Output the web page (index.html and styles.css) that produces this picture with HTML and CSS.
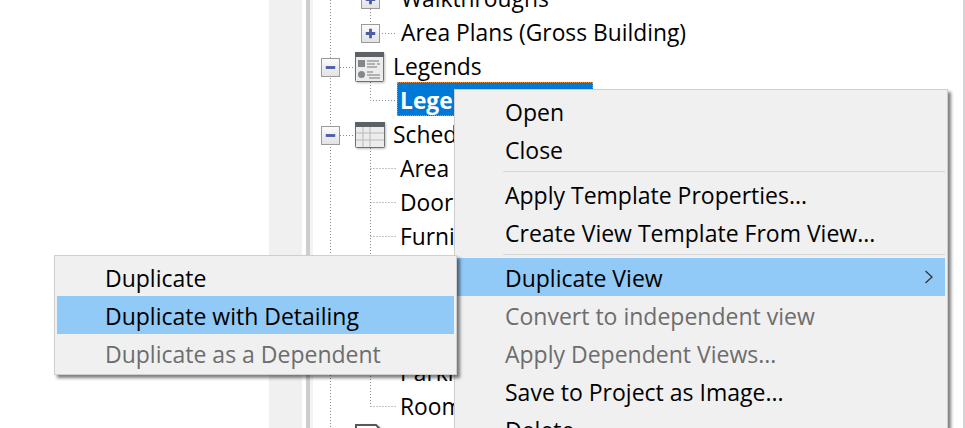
FILE: index.html
```html
<!DOCTYPE html>
<html lang="en">
<head>
<meta charset="utf-8">
<title>Duplicate View menu</title>
<link rel="stylesheet" href="styles.css">
</head>
<body>
<div class="app">
  <div class="pane-left"></div>
  <div class="band"></div>
  <div class="gap"></div>
  <div class="splitter"></div>
  <div class="edge"></div>
  <div class="tree">
    <svg class="lines" width="650" height="428" viewBox="0 0 650 428">
      <path d="M17.5 0V428M57.5 0V24M27 67.5H42M27 135.5H42M66 33.5H84M57.5 79V100.5H84M57.5 148V406.5M57.5 168.5H84M57.5 202.5H84M57.5 236.5H84M57.5 270.5H84M57.5 304.5H84M57.5 338.5H84M57.5 372.5H84M57.5 406.5H84"/>
    </svg>
    <div class="rows">
      <div class="row leaf-box"><span class="box"><svg class="sign" viewBox="0 0 18 18"><path d="M4 9H14M9 4V14"/></svg></span><span class="label">Walkthroughs</span></div>
      <div class="row leaf-box"><span class="box"><svg class="sign" viewBox="0 0 18 18"><path d="M4 9H14M9 4V14"/></svg></span><span class="label">Area Plans (Gross Building)</span></div>
      <div class="row branch">
        <span class="box"><svg class="sign" viewBox="0 0 18 18"><path d="M4 9H14"/></svg></span>
        <svg class="node-icon" viewBox="0 0 30 30">
          <rect class="ic-body" x="0.5" y="0.5" width="28" height="29" rx="1"/>
          <rect class="ic-head" x="0" y="0" width="29" height="5"/>
          <rect class="ic-fill" x="3" y="8" width="7" height="7"/>
          <circle class="ic-fill" cx="6.5" cy="22.5" r="3.5"/>
          <path class="ic-text" d="M12 9H24M12 12H20M22 12H25M12 15H22M12 20H18M12 23H25M14 26H25"/>
        </svg>
        <span class="label">Legends</span>
      </div>
      <div class="row leaf"><span class="label selected">Lege</span></div>
      <div class="row branch">
        <span class="box"><svg class="sign" viewBox="0 0 18 18"><path d="M4 9H14"/></svg></span>
        <svg class="node-icon" viewBox="0 0 30 30">
          <rect class="ic-body" x="0.5" y="2.5" width="29" height="25" rx="1"/>
          <rect class="ic-head" x="0" y="2" width="30" height="5"/>
          <path class="ic-grid" d="M8 7V27M15 7V27M1 13H29M1 20H29"/>
        </svg>
        <span class="label">Sched</span>
      </div>
      <div class="row leaf"><span class="label">Area</span></div>
      <div class="row leaf"><span class="label">Door</span></div>
      <div class="row leaf"><span class="label">Furni</span></div>
      <div class="row leaf"></div>
      <div class="row leaf"></div>
      <div class="row leaf"></div>
      <div class="row leaf"><span class="label">Parkin</span></div>
      <div class="row leaf"><span class="label">Room</span></div>
      <div class="row branch">
        <span class="box box-hidden"></span>
        <svg class="node-icon sheet-icon" viewBox="0 0 30 30">
          <path class="ic-sheet" d="M1 28V1H21L28 8V28Z"/>
        </svg>
      </div>
    </div>
  </div>
  <div class="edge-right"></div>

  <ul class="menu menu-main">
    <li class="item">Open</li>
    <li class="item">Close</li>
    <li class="sep"></li>
    <li class="item">Apply Template Properties...</li>
    <li class="item">Create View Template From View...</li>
    <li class="sep"></li>
    <li class="item active">Duplicate View<svg class="chevron" viewBox="0 0 10 14"><path d="M1.5 1L8 7L1.5 13"/></svg></li>
    <li class="item disabled">Convert to independent view</li>
    <li class="item disabled">Apply Dependent Views...</li>
    <li class="item">Save to Project as Image...</li>
    <li class="item">Delete</li>
  </ul>

  <ul class="menu menu-sub">
    <li class="item">Duplicate</li>
    <li class="item active">Duplicate with Detailing</li>
    <li class="item disabled">Duplicate as a Dependent</li>
  </ul>
</div>
</body>
</html>
```
FILE: styles.css
```css
* { box-sizing: border-box; }
html, body { margin: 0; padding: 0; background: #fff; }
body { font-family: "Open Sans", "Noto Sans", sans-serif; color: #000; }

.app { position: relative; display: flex; width: 965px; height: 428px; overflow: hidden; background: #fff; }
.pane-left { width: 269px; background: #fff; }
.band { width: 33px; background: #f0f0f0; }
.gap { width: 4px; background: #fff; }
.splitter { width: 4px; background: #cdcdcd; }
.edge { width: 3px; background: #f3f3f3; }
.edge-right { width: 2px; background: #d4d4d4; }

.tree { position: relative; flex: 1; background: #fff; font-size: 22.8px; }
.lines { position: absolute; top: 0; left: 0; }
.lines path { fill: none; stroke: #8a8a8a; stroke-width: 1; stroke-dasharray: 1 2; }
.rows { position: relative; margin-top: -18px; }

.row { display: flex; align-items: center; height: 34px; white-space: nowrap; }
.label { margin-top: -2px; }
.leaf-box { padding-left: 48px; }
.branch { padding-left: 8px; }
.leaf { padding-left: 84px; }
.leaf .label { padding-left: 3px; }
.leaf-box .box { margin-right: 21px; }
.branch .box { margin-right: 15px; }

.box { display: block; width: 19px; height: 19px; border: 1px solid #9a9a9a; background: linear-gradient(#fbfbfb, #e2e2e2); }
.box-hidden { visibility: hidden; }
.sign { display: block; width: 17px; height: 17px; }
.sign path { fill: none; stroke: #4a5ea5; stroke-width: 3; }

.node-icon { display: block; width: 30px; height: 30px; margin-right: 8px; flex: none; filter: drop-shadow(1px 1px 1px rgba(0, 0, 0, .25)); }
.sheet-icon { margin-top: -4px; }
.ic-body { fill: #ececec; stroke: #6f7275; }
.ic-head { fill: #5d6166; }
.ic-fill { fill: #85888b; }
.ic-text { fill: none; stroke: #77797c; stroke-width: 1; }
.ic-grid { fill: none; stroke: #b9babd; stroke-width: 1; }
.ic-sheet { fill: #fff; stroke: #55585c; stroke-width: 2; }

.leaf .selected { display: block; width: 196px; height: 34px; margin-top: -4px; line-height: 36px; color: #fff; font-weight: 700; background: #0078d7; border: 1px dotted #e08a3c; padding-left: 2px; }

.menu { position: absolute; margin: 0; padding: 2px; list-style: none; background: #f0f0f0; border: 1px solid #cfcfcf; box-shadow: 3px 3px 3px rgba(0, 0, 0, .5); font-size: 23px; }
.menu-main { top: 89px; left: 454px; width: 494px; }
.menu-sub { top: 255px; left: 54px; width: 403px; height: 120px; }

.item { display: flex; align-items: center; justify-content: space-between; height: 38px; padding: 2px 11px 0 48px; white-space: nowrap; }
.active { background: #91c9f7; }
.disabled { color: #6d6d6d; }
.sep { height: 1px; margin: 3px 0 3px 46px; background: #d7d7d7; }
.chevron { width: 10px; height: 14px; margin-top: -2px; }
.chevron path { fill: none; stroke: #333; stroke-width: 1.3; }
```
